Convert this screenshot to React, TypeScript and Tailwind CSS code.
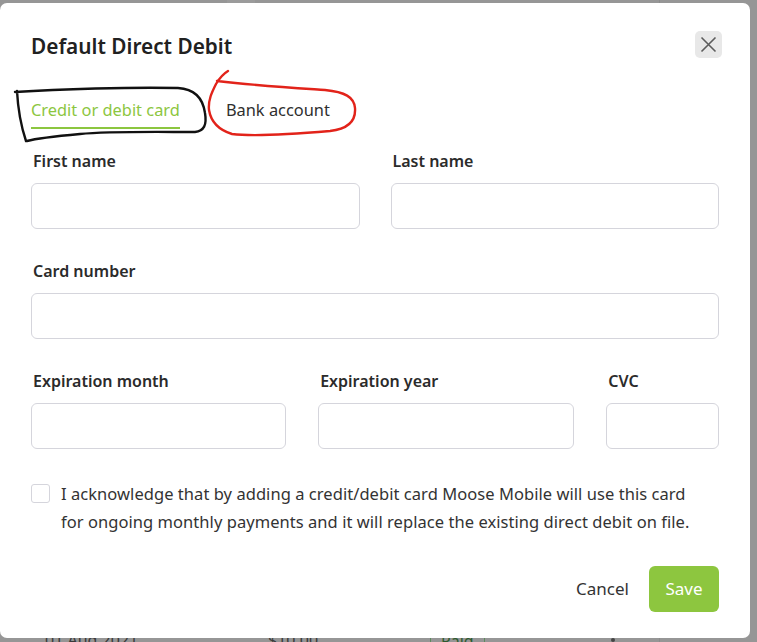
import React from "react";

const font = { fontFamily: '"Noto Sans", "Open Sans", sans-serif' };

function Field({ label, className }: { label: string; className?: string }) {
  return (
    <div className={className}>
      <div className="pl-[2px] text-[16px] leading-[24px] font-semibold text-[#2b2b2b]">{label}</div>
      <div className="mt-[10px] h-[46px] rounded-[6px] border border-[#d5d5dc] bg-white" />
    </div>
  );
}

export default function App() {
  return (
    <div className="relative w-[757px] h-[642px] overflow-hidden bg-[#969696]" style={font}>
      {/* page behind the backdrop */}
      <div className="relative h-full">
        <div className="absolute left-[227px] top-0 h-[4px] w-[28px] bg-[#9b9b9b]" />
        <div className="absolute left-[659px] top-0 h-full w-px bg-[#8c8c8c]" />
        <div className="flex items-start pt-[630px] pl-[45px] text-[16px] leading-[20px] text-[#3a3a3a]">
          <span className="w-[223px]">01 Aug 2021</span>
          <span className="w-[162px]">$10.00</span>
          <span className="rounded-[3px] border border-[#5e8a5e] px-[10px] text-[#2e5a2e]">Paid</span>
          <span className="ml-[126px] mt-[8px] h-[4px] w-[4px] rounded-full bg-[#444]" />
        </div>
      </div>

      {/* dialog */}
      <div className="absolute left-0 top-[3px] w-[750px] h-[635px] rounded-[7px] bg-white pl-[31px] pr-[31px] pt-[25px] pb-[26px] flex flex-col">
        <div className="flex items-center justify-between">
          <h2 className="text-[20.8px] leading-[36px] font-semibold text-[#212121]">Default Direct Debit</h2>
          <button className="mr-[-3px] mt-[-4px] flex h-[27px] w-[27px] items-center justify-center rounded-[5px] bg-[#e8e8e8]">
            <svg width="17" height="17" viewBox="0 0 17 17" fill="none" stroke="#5c5c5c" strokeWidth="1.6">
              <path d="M1.5 1.5 L15.5 15.5 M15.5 1.5 L1.5 15.5" />
            </svg>
          </button>
        </div>

        <div className="mt-[34px] flex items-start text-[16.4px] leading-[24px]">
          <div className="border-b-2 border-[#8cc63f] pb-[5px] text-[#8cc63f]">Credit or debit card</div>
          <div className="ml-[46px] text-[#2f2f2f]">Bank account</div>
        </div>

        <div className="mt-[20px] flex gap-[31px]">
          <Field label="First name" className="w-[329px]" />
          <Field label="Last name" className="w-[329px]" />
        </div>

        <Field label="Card number" className="mt-[30px]" />

        <div className="mt-[30px] flex gap-[32px]">
          <Field label="Expiration month" className="w-[256px]" />
          <Field label="Expiration year" className="w-[257px]" />
          <Field label="CVC" className="w-[113px]" />
        </div>

        <div className="mt-[31px] flex items-start">
          <div className="mt-[4px] h-[19px] w-[19px] shrink-0 rounded-[3px] border border-[#d5d5dc] bg-white" />
          <p className="ml-[11px] w-[640px] text-[16.5px] leading-[28px] text-[#333] tracking-[0.05px]">
            I acknowledge that by adding a credit/debit card Moose Mobile will use this card for ongoing monthly payments and it will replace the existing direct debit on file.
          </p>
        </div>

        <div className="mt-auto flex items-center justify-end">
          <button className="text-[17px] text-[#333]">Cancel</button>
          <button className="ml-[20px] h-[46px] w-[70px] rounded-[6px] bg-[#8dc63f] text-[17px] text-white">Save</button>
        </div>
      </div>

      {/* hand-drawn annotations */}
      <svg className="pointer-events-none absolute left-0 top-0" width="757" height="642" viewBox="0 0 757 642" fill="none">
        <path
          d="M15,92 C60,89 130,87 178,88 C195,89 203,99 205,113 C207,125 204,131 195,132 C160,132 110,131 80,134 C58,136 38,138 27,141 M17,91 C18,110 21,126 26,141"
          stroke="#111"
          strokeWidth="2.4"
          strokeLinecap="round"
          strokeLinejoin="round"
        />
        <path
          d="M228,71 C223,74 219,79 216,84 C212,92 208,100 209,110 C211,122 219,130 232,134 C255,137 295,134 330,131 C348,129 356,121 355,108 C354,97 345,92 325,90 C295,88 260,86 217,81"
          stroke="#e2231a"
          strokeWidth="2.4"
          strokeLinecap="round"
          strokeLinejoin="round"
        />
      </svg>
    </div>
  );
}
